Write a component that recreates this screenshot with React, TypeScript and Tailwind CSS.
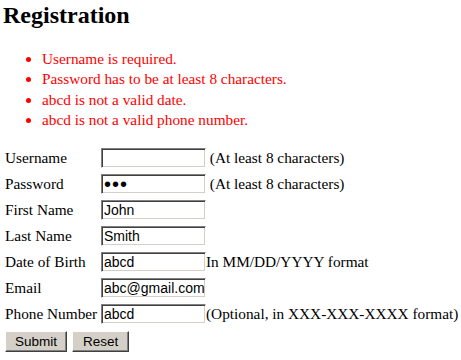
import React from "react";

const errors = [
  "Username is required.",
  "Password has to be at least 8 characters.",
  "abcd is not a valid date.",
  "abcd is not a valid phone number.",
];

const fields = [
  { label: "Username", type: "text", value: "", note: "\u00a0(At least 8 characters)" },
  { label: "Password", type: "password", value: "abc", note: "\u00a0(At least 8 characters)" },
  { label: "First Name", type: "text", value: "John", note: "" },
  { label: "Last Name", type: "text", value: "Smith", note: "" },
  { label: "Date of Birth", type: "text", value: "abcd", note: "In MM/DD/YYYY format" },
  { label: "Email", type: "text", value: "abc@gmail.com", note: "" },
  { label: "Phone Number", type: "text", value: "abcd", note: "(Optional, in XXX-XXX-XXXX format)" },
];

const inputCls =
  "w-[105px] h-[20px] pl-[2px] pr-0 py-0 bg-white text-black leading-none outline-none border border-t-[#808080] border-l-[#808080] border-b-white border-r-white shadow-[inset_1px_1px_0_#404040,inset_-1px_-1px_0_#d4d0c8] [font-family:'Liberation_Sans',Arial,sans-serif]";

const buttonCls =
  "h-[21px] px-[9px] bg-[#d4d0c8] text-black text-[13.5px] leading-none border border-t-white border-l-white border-b-[#404040] border-r-[#404040] shadow-[inset_-1px_-1px_0_#808080] [font-family:'Liberation_Sans',Arial,sans-serif]";

export default function App() {
  return (
    <div className="min-h-[360px] bg-white text-black text-[15.3px] [font-family:'Liberation_Serif','Times_New_Roman',serif]">
      <h2 className="pt-[2px] pl-[3px] text-[24px] font-bold leading-[27px]">Registration</h2>

      {/* Validation summary */}
      <ul className="mt-[20px] pl-[42px] list-disc text-[#ff0000] leading-[20.33px]">
        {errors.map((e, i) => (
          <li key={i}>{e}</li>
        ))}
      </ul>

      <form className="mt-[15px] pl-[5px]" onSubmit={(ev) => ev.preventDefault()}>
        {fields.map((f, i) => (
          <div key={i} className="flex items-center h-[26px] whitespace-nowrap">
            <span className="w-[96px]">{f.label}</span>
            <input
              type={f.type}
              defaultValue={f.value}
              className={`${inputCls} ${f.type === "password" ? "text-[20px] tracking-[1px]" : "text-[14px]"}`}
            />
            <span>{f.note}</span>
          </div>
        ))}
        <div className="flex items-center gap-[5px] h-[26px] mt-[1px]">
          <button type="submit" className={buttonCls}>Submit</button>
          <button type="reset" className={`${buttonCls} px-[10px]`}>Reset</button>
        </div>
      </form>
    </div>
  );
}
